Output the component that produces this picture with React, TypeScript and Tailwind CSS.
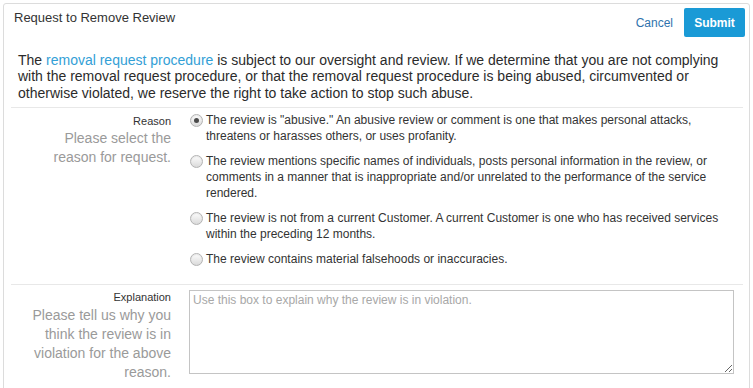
import { useState } from 'react'

const reasons = [
  'The review is "abusive." An abusive review or comment is one that makes personal attacks, threatens or harasses others, or uses profanity.',
  'The review mentions specific names of individuals, posts personal information in the review, or comments in a manner that is inappropriate and/or unrelated to the performance of the service rendered.',
  'The review is not from a current Customer. A current Customer is one who has received services within the preceding 12 months.',
  'The review contains material falsehoods or inaccuracies.',
]

function Radio({ checked }: { checked: boolean }) {
  return (
    <span className="mt-[1.5px] flex h-[13px] w-[13px] shrink-0 items-center justify-center rounded-full border border-[#b3b3b3] bg-linear-to-b from-[#fdfdfd] to-[#dadada] shadow-[inset_0_1px_1px_rgba(0,0,0,0.08)]">
      {checked && <span className="h-[5px] w-[5px] rounded-full bg-[#4a4a4a]" />}
    </span>
  )
}

const App = () => {
  const [selected, setSelected] = useState(0)

  return (
    <div className="min-h-screen bg-white px-[3px] pt-[3px] font-['Liberation_Sans',Arial,sans-serif] text-[#333]">
      <div className="h-[400px] rounded-[3px] border border-[#dcdcdc] bg-white">
        {/* header */}
        <div className="flex items-start justify-between">
          <div className="pl-[10px] pt-[6px] text-[13px] leading-[16px] text-[#333]">Request to Remove Review</div>
          <div className="flex items-center gap-[11px] pr-[4px] pt-[4px]">
            <button className="text-[12px] text-[#2f73ad]">Cancel</button>
            <button className="h-[29px] w-[61px] rounded-[2px] bg-[#1a9ad6] text-[12px] font-bold text-white">Submit</button>
          </div>
        </div>

        <p className="mt-[14.5px] pl-[14px] pr-[6px] text-[14px] leading-[16.5px] text-[#2b2b2b]">
          The <a className="text-[#33a0d6]">removal request procedure</a> is subject to our oversight and review. If we
          determine that you are not complying with the removal request procedure, or that the removal request procedure is
          being abused, circumvented or otherwise violated, we reserve the right to take action to stop such abuse.
        </p>

        <div className="ml-[7px] mr-[6px] mt-[6px] border-t border-[#e8e8e8]" />

        {/* reason */}
        <div className="ml-[7px] mr-[6px] grid grid-cols-[160px_1fr] gap-x-[18px] pb-[17px]">
          <div className="pt-[6px] text-right">
            <div className="text-[11px] leading-[14px] text-[#333]">Reason</div>
            <div className="mt-[1px] text-[14px] leading-[19px] text-[#9a9a9a]">
              Please select the
              <br />
              reason for request.
            </div>
          </div>
          <div className="flex flex-col gap-[9px] pr-[6px] pt-[4px]">
            {reasons.map((r, i) => (
              <label key={i} className="flex cursor-pointer items-start gap-[3px] pl-[1px]" onClick={() => setSelected(i)}>
                <Radio checked={selected === i} />
                <span className="text-[12px] leading-[16px] text-[#333]">{r}</span>
              </label>
            ))}
          </div>
        </div>

        <div className="ml-[7px] mr-[6px] border-t border-[#e8e8e8]" />

        {/* explanation */}
        <div className="ml-[7px] mr-[6px] grid grid-cols-[160px_1fr] gap-x-[18px] pt-[5px]">
          <div className="text-right">
            <div className="text-[11px] leading-[14px] text-[#333]">Explanation</div>
            <div className="mt-[2px] text-[14px] leading-[19px] text-[#9a9a9a]">
              Please tell us why you think the review is in violation for the above reason.
            </div>
          </div>
          <div>
            <textarea
              className="block h-[84px] w-[545px] resize border border-[#c4c4c4] px-[3px] py-[1px] text-[12px] leading-[16px] text-[#333] outline-none placeholder:text-[#a8a8a8]"
              placeholder="Use this box to explain why the review is in violation."
            />
          </div>
        </div>
      </div>
    </div>
  )
}

export default App
